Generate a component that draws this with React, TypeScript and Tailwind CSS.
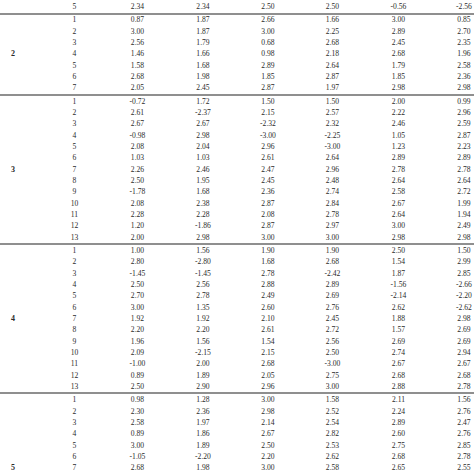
import React from "react";

type Group = { label: string; start: number; rows: string[][]; labelAtEnd?: boolean };

const groups: Group[] = [
  { label: "", start: 5, rows: [["2.34", "2.34", "2.50", "2.50", "-0.56", "-2.56"]] },
  {
    label: "2",
    start: 1,
    rows: [
      ["0.87", "1.87", "2.66", "1.66", "3.00", "0.85"],
      ["3.00", "1.87", "3.00", "2.25", "2.89", "2.70"],
      ["2.56", "1.79", "0.68", "2.68", "2.45", "2.35"],
      ["1.46", "1.66", "0.98", "2.18", "2.68", "1.96"],
      ["1.58", "1.68", "2.89", "2.64", "1.79", "2.58"],
      ["2.68", "1.98", "1.85", "2.87", "1.85", "2.36"],
      ["2.05", "2.45", "2.87", "1.97", "2.98", "2.98"],
    ],
  },
  {
    label: "3",
    start: 1,
    rows: [
      ["-0.72", "1.72", "1.50", "1.50", "2.00", "0.99"],
      ["2.61", "-2.37", "2.15", "2.57", "2.22", "2.96"],
      ["2.67", "2.67", "-2.32", "2.32", "2.46", "2.59"],
      ["-0.98", "2.98", "-3.00", "-2.25", "1.05", "2.87"],
      ["2.08", "2.04", "2.96", "-3.00", "1.23", "2.23"],
      ["1.03", "1.03", "2.61", "2.64", "2.89", "2.89"],
      ["2.26", "2.46", "2.47", "2.96", "2.78", "2.78"],
      ["2.50", "1.95", "2.45", "2.48", "2.64", "2.64"],
      ["-1.78", "1.68", "2.36", "2.74", "2.58", "2.72"],
      ["2.08", "2.38", "2.87", "2.84", "2.67", "1.99"],
      ["2.28", "2.28", "2.08", "2.78", "2.64", "1.94"],
      ["1.20", "-1.86", "2.87", "2.97", "3.00", "2.49"],
      ["2.00", "2.98", "3.00", "3.00", "2.98", "2.98"],
    ],
  },
  {
    label: "4",
    start: 1,
    rows: [
      ["1.00", "1.56", "1.90", "1.90", "2.50", "1.50"],
      ["2.80", "-2.80", "1.68", "2.68", "1.54", "2.99"],
      ["-1.45", "-1.45", "2.78", "-2.42", "1.87", "2.85"],
      ["2.50", "2.56", "2.88", "2.89", "-1.56", "-2.66"],
      ["2.70", "2.78", "2.49", "2.69", "-2.14", "-2.20"],
      ["3.00", "1.35", "2.60", "2.76", "2.62", "-2.62"],
      ["1.92", "1.92", "2.10", "2.45", "1.88", "2.98"],
      ["2.20", "2.20", "2.61", "2.72", "1.57", "2.69"],
      ["1.96", "1.56", "1.54", "2.56", "2.69", "2.69"],
      ["2.09", "-2.15", "2.15", "2.50", "2.74", "2.94"],
      ["-1.00", "2.00", "2.68", "-3.00", "2.67", "2.67"],
      ["0.89", "1.89", "2.05", "2.75", "2.68", "2.68"],
      ["2.50", "2.90", "2.96", "3.00", "2.88", "2.78"],
    ],
  },
  {
    label: "5",
    start: 1,
    labelAtEnd: true,
    rows: [
      ["0.98", "1.28", "3.00", "1.58", "2.11", "1.56"],
      ["2.30", "2.36", "2.98", "2.52", "2.24", "2.76"],
      ["2.58", "1.97", "2.14", "2.54", "2.89", "2.47"],
      ["0.89", "1.86", "2.67", "2.82", "2.60", "2.76"],
      ["3.00", "1.89", "2.50", "2.53", "2.75", "2.85"],
      ["-1.05", "-2.20", "2.20", "2.62", "2.68", "2.78"],
      ["2.68", "1.98", "3.00", "2.58", "2.65", "2.55"],
    ],
  },
];

function Row({ idx, vals }: { idx: number; vals: string[] }) {
  return (
    <div className="flex h-[11.33px] items-center leading-none">
      <div className="w-[61px] text-center">{idx}</div>
      <div className="w-[65px] text-center">{vals[0]}</div>
      <div className="w-[66px] text-center">{vals[1]}</div>
      <div className="w-[64px] text-center">{vals[2]}</div>
      <div className="w-[65px] text-center">{vals[3]}</div>
      <div className="w-[67px] text-center">{vals[4]}</div>
      <div className="w-[64px] text-center">{vals[5]}</div>
    </div>
  );
}

export default function App() {
  return (
    <div
      className="w-[474px] h-[474px] overflow-hidden bg-white text-[#2a2a2a] text-[7.6px]"
      style={{ fontFamily: '"Liberation Serif", "Times New Roman", serif' }}
    >
      <div className="w-[496px] pt-[1.3px]">
        {groups.map((g, gi) => (
          <div
            key={gi}
            className={
              gi < groups.length - 1
                ? "flex border-b-2 border-[#8f8f8f]"
                : "flex"
            }
          >
            <div
              className={
                g.labelAtEnd
                  ? "w-[44px] flex flex-col justify-end pl-[11px] font-bold text-[8px]"
                  : "w-[44px] flex items-center pl-[11px] font-bold text-[8px]"
              }
            >
              {g.labelAtEnd ? (
                <div className="h-[11.33px] flex items-center leading-none">{g.label}</div>
              ) : (
                g.label
              )}
            </div>
            <div className="flex flex-col">
              {g.rows.map((r, ri) => (
                <Row key={ri} idx={g.start + ri} vals={r} />
              ))}
            </div>
          </div>
        ))}
      </div>
    </div>
  );
}
